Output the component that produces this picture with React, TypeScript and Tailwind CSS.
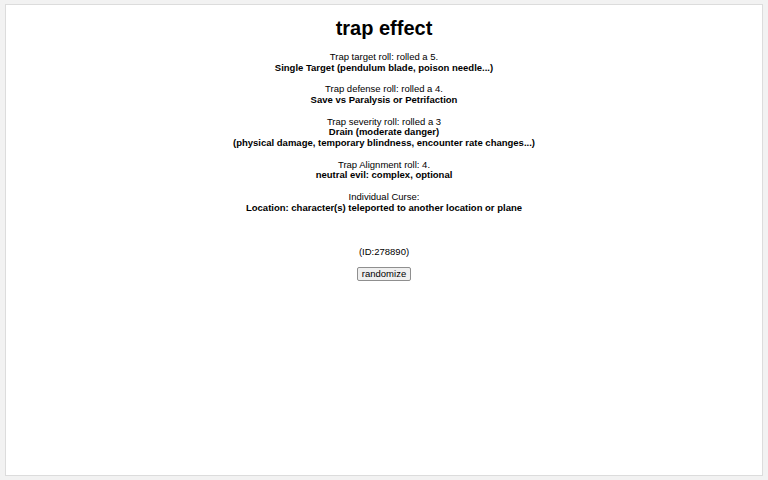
import React from "react";

type Roll = { label: string; result: string[] };

const rolls: Roll[] = [
  { label: "Trap target roll: rolled a 5.", result: ["Single Target (pendulum blade, poison needle...)"] },
  { label: "Trap defense roll: rolled a 4.", result: ["Save vs Paralysis or Petrifaction"] },
  {
    label: "Trap severity roll: rolled a 3",
    result: ["Drain (moderate danger)", "(physical damage, temporary blindness, encounter rate changes...)"],
  },
  { label: "Trap Alignment roll: 4.", result: ["neutral evil: complex, optional"] },
  { label: "Individual Curse:", result: ["Location: character(s) teleported to another location or plane"] },
];

export default function App() {
  return (
    <div className="h-[480px] w-[768px] bg-[#f2f2f2] px-[5px] pt-[4px] pb-[4px] font-['Liberation_Sans',Arial,sans-serif] text-black">
      <div className="h-full border border-[#dcdcdc] bg-white text-center">
        <h1 className="mt-[9px] text-[20px] font-bold leading-[28px]">trap effect</h1>
        <div className="mt-[10px] flex flex-col gap-[10.75px] text-[9.5px] leading-[10.75px]">
          {rolls.map((r) => (
            <div key={r.label}>
              <div>{r.label}</div>
              {r.result.map((line) => (
                <div key={line} className="font-bold">{line}</div>
              ))}
            </div>
          ))}
        </div>
        <p className="mt-[33px] text-[9.5px] leading-[11px]">(ID:278890)</p>
        <button className="mt-[10px] rounded-[2px] border border-[#8f8f8f] bg-[#efefef] px-[4px] text-[9.5px] leading-[12px]">
          randomize
        </button>
      </div>
    </div>
  );
}
